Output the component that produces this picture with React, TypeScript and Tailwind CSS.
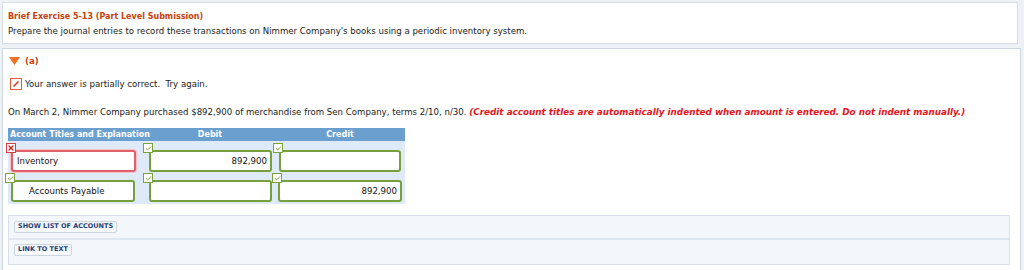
import { Check, X } from "lucide-react";

function Status({ ok }: { ok: boolean }) {
  return ok ? (
    <div className="absolute left-[-6px] top-[-7px] z-10 flex h-[10px] w-[10px] items-center justify-center border border-[#7aa33a] bg-white">
      <Check className="h-[7px] w-[7px] text-[#6a9a2a]" strokeWidth={3} />
    </div>
  ) : (
    <div className="absolute left-[-5px] top-[-7px] z-10 flex h-[10px] w-[10px] items-center justify-center border border-[#d04040] bg-white">
      <X className="h-[8px] w-[8px] text-[#d02020]" strokeWidth={4} />
    </div>
  );
}

function Field({
  ok,
  value,
  width,
  align = "left",
  indent = false,
}: {
  ok: boolean;
  value: string;
  width: string;
  align?: "left" | "right";
  indent?: boolean;
}) {
  return (
    <div className={`relative ${width}`}>
      <Status ok={ok} />
      <div
        className={`flex h-[22px] items-center rounded-[3px] border-2 bg-white pr-[3px] text-[8.6px] text-[#111] ${
          ok ? "border-[#76a03c]" : "border-[#e0606a] shadow-[0_0_0_1px_#f6c2c6]"
        } ${align === "right" ? "justify-end" : ""} ${indent ? "pl-[16px]" : "pl-[4px]"}`}
      >
        {value}
      </div>
    </div>
  );
}

export default function App() {
  return (
    <div
      className="h-[270px] w-[1024px] overflow-hidden bg-[#eef2f7] pl-[2px] pt-[2px] text-[8.6px] text-[#1a1a1a]"
      style={{ fontFamily: "Verdana, 'DejaVu Sans', sans-serif" }}
    >
      <div className="h-[42px] w-[1016px] border border-[#d6dde6] bg-white px-[5px] pt-[6px]">
        <div className="text-[8px] font-bold leading-[15px] text-[#c9410e]">
          Brief Exercise 5-13 (Part Level Submission)
        </div>
        <div className="leading-[15px]">
          Prepare the journal entries to record these transactions on Nimmer Company's books using a periodic inventory system.
        </div>
      </div>

      <div className="mt-[4px] h-[230px] w-[1019px] border border-[#d0d7e0] bg-white px-[5px] pt-[5px]">
        <div className="flex items-center gap-[5px] font-bold leading-[14px] text-[#c9410e]">
          <svg width="11" height="8" viewBox="0 0 11 8" className="ml-[1px]">
            <polygon points="0,0 11,0 5.5,8" fill="#f07020" />
          </svg>
          (a)
        </div>

        <div className="mt-[9px] flex items-center gap-[3px] pl-[2px] leading-[14px]">
          <div className="flex h-[12px] w-[12px] items-center justify-center border border-[#e05a3a] bg-white">
            <svg width="8" height="8" viewBox="0 0 8 8">
              <line x1="1.5" y1="6.5" x2="6.5" y2="1.5" stroke="#d03a1a" strokeWidth="1.6" />
            </svg>
          </div>
          <span>Your answer is partially correct.&nbsp; Try again.</span>
        </div>

        <div className="mt-[14px] whitespace-nowrap leading-[14px]">
          On March 2, Nimmer Company purchased $892,900 of merchandise from Sen Company, terms 2/10, n/30.{" "}
          <span className="text-[8.8px] font-bold italic text-[#e8141c]">
            (Credit account titles are automatically indented when amount is entered. Do not indent manually.)
          </span>
        </div>

        <div className="mt-[9px] w-[397px] bg-[#dfeaf8]">
          <div className="grid h-[13px] grid-cols-[137px_130px_130px] items-center bg-[#6b9fce] text-[8px] font-bold leading-[13px] text-white">
            <div className="whitespace-nowrap pl-[2px]">Account Titles and Explanation</div>
            <div className="text-center">Debit</div>
            <div className="text-center">Credit</div>
          </div>
          <div className="flex flex-col gap-[8px] pb-[2px] pl-[3px] pt-[9px]">
            <div className="flex">
              <Field ok={false} value="Inventory" width="w-[125px]" />
              <div className="w-[13px]" />
              <Field ok value="892,900" align="right" width="w-[123px]" />
              <div className="w-[7px]" />
              <Field ok value="" width="w-[122px]" />
            </div>
            <div className="flex">
              <Field ok value="Accounts Payable" indent width="w-[124px]" />
              <div className="w-[14px]" />
              <Field ok value="" width="w-[123px]" />
              <div className="w-[6px]" />
              <Field ok value="892,900" align="right" width="w-[124px]" />
            </div>
          </div>
        </div>

        <div className="mt-[11px] w-[1002px] border border-[#d8dfe8] bg-[#f3f7fb]">
          <div className="border-b-2 border-[#dfe6ef] px-[5px] pb-[5px] pt-[5px]">
            <button className="flex h-[12px] items-center rounded-[2px] border border-[#ccd5e0] bg-[#f7f9fc] px-[3px] text-[6.5px] font-bold text-[#24427a]">
              SHOW LIST OF ACCOUNTS
            </button>
          </div>
          <div className="px-[5px] pb-[8px] pt-[4px]">
            <button className="flex h-[12px] items-center rounded-[2px] border border-[#ccd5e0] bg-[#f7f9fc] px-[3px] text-[6.5px] font-bold text-[#24427a]">
              LINK TO TEXT
            </button>
          </div>
        </div>
      </div>
    </div>
  );
}
